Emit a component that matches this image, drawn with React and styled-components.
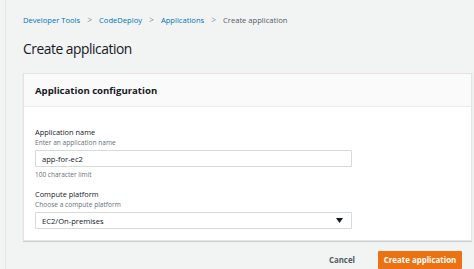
import React from "react";
import styled, { createGlobalStyle } from "styled-components";

const Global = createGlobalStyle`
  html, body { margin: 0; padding: 0; background: #f2f3f3; overflow: hidden; }
  body { font-family: "Open Sans", "Noto Sans", Arial, sans-serif; color: #16191f; }
  * { box-sizing: border-box; }
`;

const Page = styled.div`
  width: 469px;
  height: 269px;
  overflow: hidden;
  background: #f2f3f3;
  border-left: 1px solid #e4e6e6;
  margin-left: 5px;
  padding: 13px 2px 0 17px;
`;

const Crumbs = styled.nav`
  display: flex;
  align-items: center;
  gap: 7px;
  height: 14px;
  font-size: 7.6px;
  line-height: 14px;
`;

const Crumb = styled.span`
  color: ${(p) => (p.$current ? "#545b64" : "#0073bb")};
`;

const Sep = styled.span`
  color: #879596;
  font-size: 8.5px;
  display: flex;
  align-items: center;
`;

const Title = styled.h1`
  margin: 9px 0 0;
  font-size: 13.8px;
  letter-spacing: -0.45px;
  font-weight: 400;
  line-height: 26px;
  color: #16191f;
`;

const Card = styled.section`
  margin-top: 11px;
  background: #fff;
  border: 1px solid #e3e5e5;
  box-shadow: 0 1px 1px rgba(0, 28, 36, 0.15);
`;

const CardHeader = styled.header`
  height: 33px;
  background: #fafafa;
  border-bottom: 1px solid #eaeded;
  display: flex;
  align-items: center;
  padding-left: 11px;
  font-size: 9.6px;
  font-weight: 700;
`;

const CardBody = styled.div`
  padding: 20px 11px 11px;
  display: flex;
  flex-direction: column;
  gap: 10px;
`;

const Field = styled.div`
  display: flex;
  flex-direction: column;
`;

const Label = styled.label`
  font-size: 7.4px;
  line-height: 11px;
  color: #16191f;
`;

const Desc = styled.div`
  font-size: 6.6px;
  line-height: 9px;
  color: #687078;
`;

const Box = styled.div`
  margin-top: 3px;
  width: 317px;
  height: 17px;
  border: 1px solid #d5dbdb;
  border-radius: 1px;
  background: #fff;
  display: flex;
  align-items: center;
  justify-content: space-between;
  padding: 0 8px 0 6px;
  font-size: 7.6px;
  color: #16191f;
`;

const Hint = styled.div`
  margin-top: 3px;
  font-size: 6.5px;
  line-height: 9px;
  color: #687078;
`;

const Caret = styled.svg`
  width: 7px;
  height: 5px;
  fill: #16191f;
`;

const Actions = styled.div`
  display: flex;
  justify-content: flex-end;
  align-items: center;
  gap: 23px;
  margin-top: 10px;
  padding-right: 10px;
`;

const LinkButton = styled.button`
  border: none;
  background: none;
  padding: 0;
  font: inherit;
  font-size: 7.9px;
  font-weight: 700;
  color: #545b64;
`;

const Primary = styled.button`
  border: none;
  background: #ec7211;
  color: #fff;
  font: inherit;
  font-size: 7.9px;
  font-weight: 700;
  width: 84px;
  height: 18px;
  padding: 0;
  border-radius: 1px;
`;

export default function App() {
  return (
    <>
      <Global />
      <Page>
        <Crumbs>
          <Crumb>Developer Tools</Crumb>
          <Sep>&gt;</Sep>
          <Crumb>CodeDeploy</Crumb>
          <Sep>&gt;</Sep>
          <Crumb>Applications</Crumb>
          <Sep>&gt;</Sep>
          <Crumb $current>Create application</Crumb>
        </Crumbs>
        <Title>Create application</Title>
        <Card>
          <CardHeader>Application configuration</CardHeader>
          <CardBody>
            <Field>
              <Label>Application name</Label>
              <Desc>Enter an application name</Desc>
              <Box>app-for-ec2</Box>
              <Hint>100 character limit</Hint>
            </Field>
            <Field>
              <Label>Compute platform</Label>
              <Desc>Choose a compute platform</Desc>
              <Box>
                EC2/On-premises
                <Caret viewBox="0 0 7 5">
                  <path d="M0 0h7L3.5 5z" />
                </Caret>
              </Box>
            </Field>
          </CardBody>
        </Card>
        <Actions>
          <LinkButton>Cancel</LinkButton>
          <Primary>Create application</Primary>
        </Actions>
      </Page>
    </>
  );
}
